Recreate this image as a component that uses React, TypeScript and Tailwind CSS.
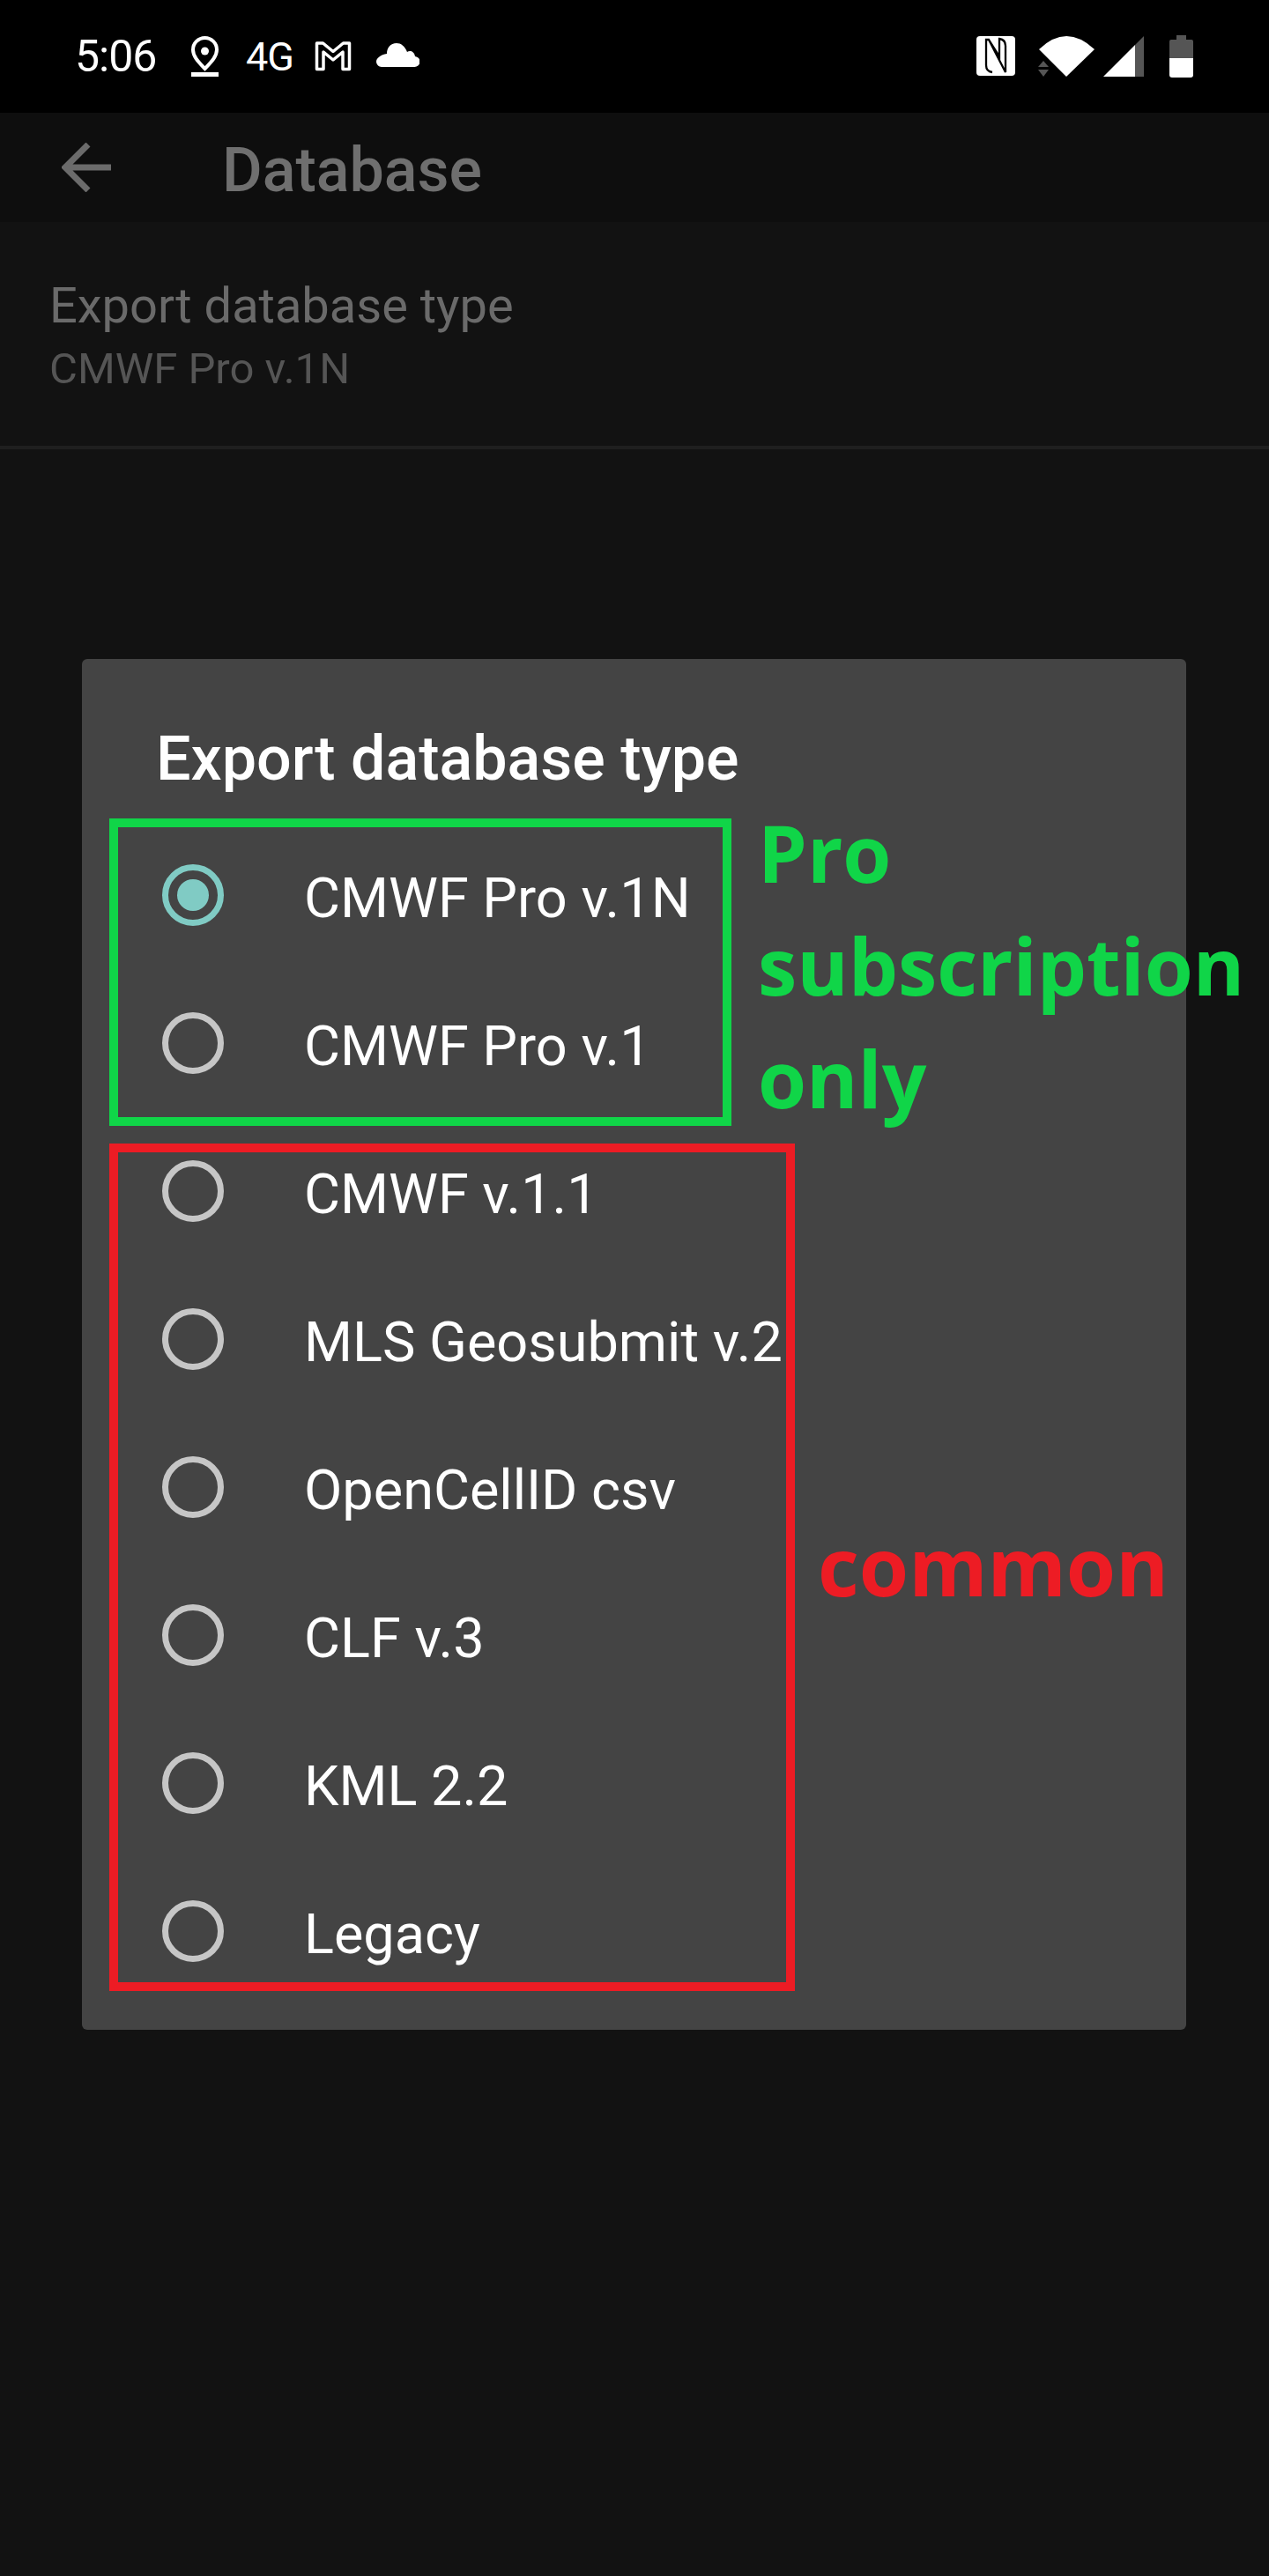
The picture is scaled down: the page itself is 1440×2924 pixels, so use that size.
const options = [
  'CMWF Pro v.1N',
  'CMWF Pro v.1',
  'CMWF v.1.1',
  'MLS Geosubmit v.2',
  'OpenCellID csv',
  'CLF v.3',
  'KML 2.2',
  'Legacy',
];

function StatusBar() {
  return (
    <div className="h-[128px] bg-black flex items-center pl-[85px] pr-[86px] text-white">
      <span className="w-[132px] text-[50px] leading-none tracking-[-1px]">5:06</span>
      <svg width="31" height="48" viewBox="0 0 31 48" fill="none">
        <path d="M15.5 38C8 30 2 24 2 16.5a13.5 13.5 0 0 1 27 0C29 24 23 30 15.5 38Z" stroke="#fff" strokeWidth="4" />
        <circle cx="15.5" cy="18" r="4.5" fill="#fff" />
        <rect y="42" width="31" height="5" fill="#fff" />
      </svg>
      <span className="ml-[31px] w-[52px] text-[45px] leading-none tracking-[-1px]">4G</span>
      <svg className="ml-[25px]" width="44" height="48" viewBox="0 0 44 48" fill="none">
        <path d="M3.5 9H10.5L22 18.5 33.5 9H40.5V38.5H33V19L22 28 11 19V38.5H3.5Z" stroke="#fff" strokeWidth="3.5" strokeLinejoin="round" />
      </svg>
      <svg className="ml-[27px]" width="49" height="48" viewBox="0 0 49 48" fill="#fff">
        <path d="M6 36H43A6 6 0 0 0 44 24C43 18 38 17 35 19 32 12 28 9 23 9 16 9 12 14 12 21 5 22 0 26 0 30 0 33 3 36 6 36Z" />
      </svg>
      <div className="ml-auto flex items-center">
        <svg width="44" height="48" viewBox="0 0 44 48" fill="none">
          <rect y="1" width="44" height="45" rx="4" fill="#fff" />
          <path d="M18 42Q11 41 11 34V5H14L33 42V12Q33 5 26 4V24L14 5" stroke="#000" strokeWidth="2.3" />
        </svg>
        <svg className="ml-[26px]" width="64" height="48" viewBox="0 0 64 48">
          <path d="M32 47 1 16Q32-14 64 16Z" fill="#fff" />
          <path d="M6 29 0 36H12ZM0 39 6 47 12 39Z" fill="#555" />
        </svg>
        <svg className="ml-[10px]" width="46" height="48" viewBox="0 0 46 48">
          <path d="M46 1V47H36V11Z" fill="#555" />
          <path d="M36 11V47H0Z" fill="#fff" />
        </svg>
        <svg className="ml-[29px]" width="27" height="48" viewBox="0 0 27 48">
          <path d="M8 0H19V5H25Q27 5 27 7V26H0V7Q0 5 2 5H8Z" fill="#555" />
          <path d="M0 26H27V45Q27 48 24 48H3Q0 48 0 45Z" fill="#fff" />
        </svg>
      </div>
    </div>
  );
}

function Radio({ checked }: { checked: boolean }) {
  if (checked) {
    return (
      <div className="w-[70px] h-[70px] shrink-0 rounded-full border-[7px] border-[#80cbc4] flex items-center justify-center">
        <div className="w-[36px] h-[36px] rounded-full bg-[#80cbc4]" />
      </div>
    );
  }
  return <div className="w-[70px] h-[70px] shrink-0 rounded-full border-[7px] border-[#c6c6c6]" />;
}

export default function App() {
  return (
    <div className="relative w-[1440px] h-[2924px] overflow-hidden bg-[#121212] font-['Roboto',sans-serif]">
      <StatusBar />

      <div className="h-[124px] bg-[#0e0e0e] flex items-center pl-[70px]">
        <svg width="56" height="56" viewBox="0 0 56 56" fill="none" stroke="#6b6b6b" strokeWidth="7">
          <path d="M56 28H5M30 2 4 28 30 54" />
        </svg>
        <span className="ml-[126px] pt-[6px] text-[70px] leading-none font-medium text-[#6f6f6f]">Database</span>
      </div>

      <div className="h-[258px] pl-[56px] pt-[60px] border-b-[4px] border-[#1f1f1f]">
        <div className="text-[56px] leading-[70px] text-[#6a6a6a]">Export database type</div>
        <div className="pt-[6px] text-[49px] leading-[62px] text-[#555555]">CMWF Pro v.1N</div>
      </div>

      {/* dialog */}
      <div className="absolute left-[93px] top-[748px] w-[1253px] h-[1556px] rounded-[6px] bg-[#444444]">
        <div className="h-[184px] pl-[84px] pt-[73px] text-[70px] leading-[80px] font-medium text-white">
          Export database type
        </div>
        {options.map((opt, i) => (
          <div key={opt} className="h-[168px] flex items-center pl-[91px] gap-[91px]">
            <Radio checked={i === 0} />
            <span className="pt-[6px] text-[63px] leading-none text-white">{opt}</span>
          </div>
        ))}
      </div>

      {/* annotations drawn on top of the screenshot */}
      <div className="absolute left-[124px] top-[929px] w-[706px] h-[349px] border-[10px] border-[#10d548]" />
      <div className="absolute left-[124px] top-[1298px] w-[778px] h-[962px] border-[10px] border-[#ed1c24]" />
      <div className="absolute left-[860px] top-[904px] text-[89px] leading-[128px] font-bold font-['Open_Sans',sans-serif] text-[#10d548]">
        <div>Pro</div>
        <div>subscription</div>
        <div>only</div>
      </div>
      <div className="absolute left-[928px] top-[1713px] text-[91px] leading-[128px] font-bold font-['Open_Sans',sans-serif] text-[#ed1c24]">
        common
      </div>
    </div>
  );
}
